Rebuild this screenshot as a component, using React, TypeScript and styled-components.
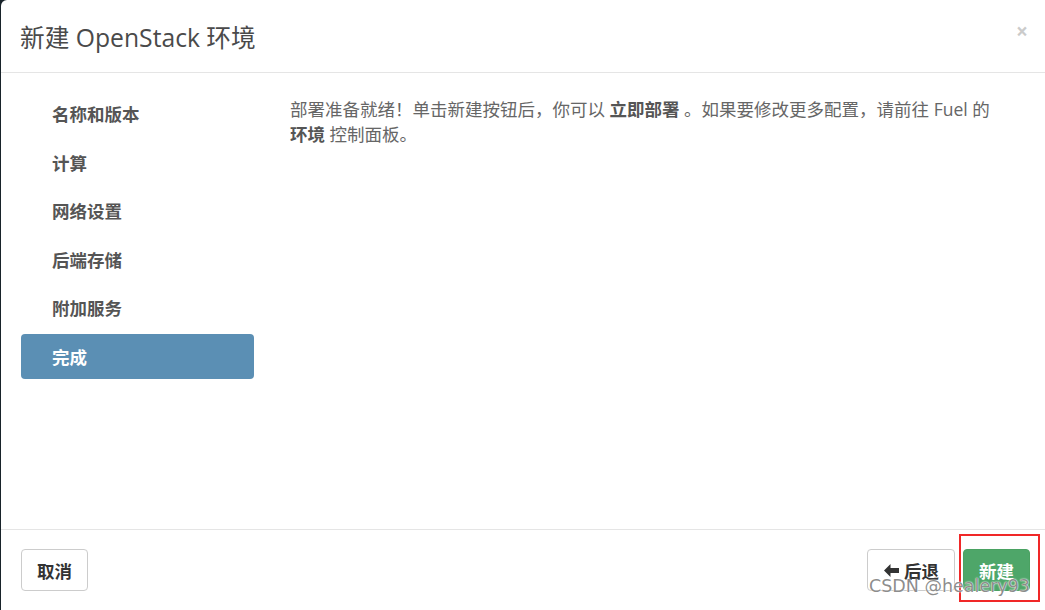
import styled, { createGlobalStyle } from "styled-components";

const GlobalStyle = createGlobalStyle`
  html, body {
    margin: 0;
    padding: 0;
    background: #18232a;
    overflow: hidden;
  }
  body {
    font-family: "Open Sans", "Noto Sans CJK SC", sans-serif;
  }
`;

const Modal = styled.div`
  position: relative;
  margin-left: 1px;
  width: 1049px;
  height: 610px;
  background: #fff;
  border-radius: 6px 0 0 0;
  display: flex;
  flex-direction: column;
`;

const Header = styled.div`
  display: flex;
  align-items: center;
  justify-content: space-between;
  height: 72px;
  padding: 0 20px 0 19px;
  border-bottom: 1px solid #e5e5e5;
`;

const Title = styled.h4`
  margin: 0;
  font-size: 24.7px;
  font-weight: 400;
  color: #4a4a4a;
`;

const Close = styled.span`
  margin-right: 2px;
  font-size: 21px;
  font-weight: 700;
  color: #000;
  opacity: 0.2;
  line-height: 1;
  margin-top: -10px;
`;

const Body = styled.div`
  flex: 1;
  display: flex;
  gap: 36px;
  padding: 18px 20px 0 20px;
  border-bottom: 1px solid #e5e5e5;
`;

const Nav = styled.ul`
  list-style: none;
  margin: 0;
  padding: 0;
  width: 233px;
  flex: none;
`;

const NavItem = styled.li<{ $active?: boolean }>`
  height: 45px;
  margin-bottom: 3.6px;
  display: flex;
  align-items: center;
  padding-left: 31px;
  border-radius: 4px;
  font-size: 17.5px;
  font-weight: 700;
  color: ${(p) => (p.$active ? "#fff" : "#555")};
  background: ${(p) => (p.$active ? "#5b8fb4" : "transparent")};
`;

const Content = styled.div`
  flex: 1;
  padding-top: 6px;
  padding-right: 25px;
  font-size: 17.5px;
  line-height: 25px;
  color: #666;
  p {
    margin: 0;
  }
  b {
    color: #555;
  }
`;

const Footer = styled.div`
  display: flex;
  align-items: center;
  justify-content: space-between;
  height: 80px;
  padding: 0 20px;
  box-sizing: border-box;
`;

const Group = styled.div`
  display: flex;
  gap: 8px;
`;

const Button = styled.button<{ $primary?: boolean }>`
  height: 42px;
  padding: 0 15px;
  display: flex;
  align-items: center;
  gap: 4px;
  font-family: "Open Sans", "Noto Sans CJK SC", sans-serif;
  font-size: 17.5px;
  font-weight: 700;
  border-radius: 4px;
  border: 1px solid ${(p) => (p.$primary ? "#4aa262" : "#ccc")};
  background: ${(p) => (p.$primary ? "#4ea669" : "#fff")};
  color: ${(p) => (p.$primary ? "#fff" : "#333")};
`;

const Highlight = styled.div`
  position: absolute;
  left: 958px;
  top: 534px;
  width: 77px;
  height: 64px;
  border: 2px solid #f02828;
  pointer-events: none;
`;

const Watermark = styled.div`
  position: absolute;
  left: 868px;
  top: 576px;
  font-family: "DejaVu Sans", sans-serif;
  font-size: 17.5px;
  color: rgba(120, 120, 120, 0.85);
  text-shadow: 0 0 2px #fff, 0 0 1px #fff;
  white-space: nowrap;
  pointer-events: none;
`;

const Arrow = () => (
  <svg width="17" height="15" viewBox="0 0 17 15">
    <path d="M7.5 1 L1 7.5 L7.5 14 L7.5 10 L16 10 L16 5 L7.5 5 Z" fill="#333" />
  </svg>
);

const steps = ["名称和版本", "计算", "网络设置", "后端存储", "附加服务", "完成"];

export default function App() {
  return (
    <>
      <GlobalStyle />
      <Modal>
        <Header>
          <Title>新建 OpenStack 环境</Title>
          <Close>×</Close>
        </Header>
        <Body>
          <Nav>
            {steps.map((s) => (
              <NavItem key={s} $active={s === "完成"}>
                {s}
              </NavItem>
            ))}
          </Nav>
          <Content>
            <p>
              部署准备就绪！单击新建按钮后，你可以 <b>立即部署</b> 。如果要修改更多配置，请前往 Fuel 的{" "}
              <b>环境</b> 控制面板。
            </p>
          </Content>
        </Body>
        <Footer>
          <Button>取消</Button>
          <Group>
            <Button>
              <Arrow />
              后退
            </Button>
            <Button $primary>新建</Button>
          </Group>
        </Footer>
        <Highlight />
        <Watermark>CSDN @healery93</Watermark>
      </Modal>
    </>
  );
}
